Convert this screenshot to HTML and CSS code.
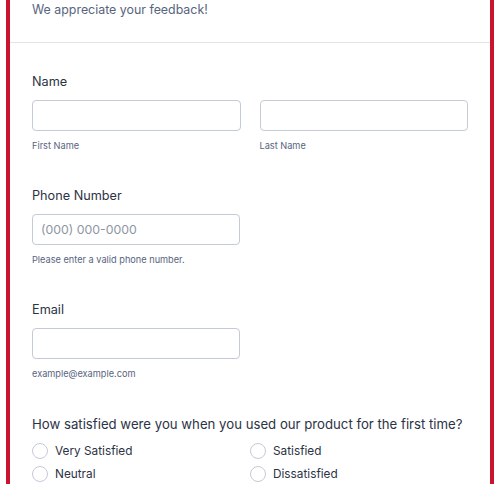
FILE: index.html
```html
<!DOCTYPE html>
<html lang="en">
<head>
  <meta charset="UTF-8">
  <title>Feedback Form</title>
  <link rel="stylesheet" href="styles.css">
</head>
<body>
  <div class="form-card">
    <div class="form-header">
      <p>We appreciate your feedback!</p>
    </div>

    <form class="form-body">
      <div class="field">
        <label class="field-label">Name</label>
        <div class="name-row">
          <div class="name-part">
            <input type="text" class="text-input">
            <span class="sub-label">First Name</span>
          </div>
          <div class="name-part">
            <input type="text" class="text-input">
            <span class="sub-label">Last Name</span>
          </div>
        </div>
      </div>

      <div class="field">
        <label class="field-label">Phone Number</label>
        <input type="tel" class="text-input half" placeholder="(000) 000-0000">
        <span class="sub-label">Please enter a valid phone number.</span>
      </div>

      <div class="field">
        <label class="field-label">Email</label>
        <input type="email" class="text-input half">
        <span class="sub-label">example@example.com</span>
      </div>

      <div class="field">
        <label class="field-label question">How satisfied were you when you used our product for the first time?</label>
        <div class="radio-grid">
          <label class="radio-option"><span class="radio-circle"></span>Very Satisfied</label>
          <label class="radio-option"><span class="radio-circle"></span>Satisfied</label>
          <label class="radio-option"><span class="radio-circle"></span>Neutral</label>
          <label class="radio-option"><span class="radio-circle"></span>Dissatisfied</label>
        </div>
      </div>
    </form>
  </div>
</body>
</html>
```

FILE: styles.css
```css
body {
  margin: 0;
  font-family: 'Inter', 'Noto Sans', sans-serif;
  background: white;
  overflow: hidden;
}
.form-card {
  margin: 0 6px;
  border-left: 4px solid #c8142c;
  border-right: 4px solid #c8142c;
  background: white;
  height: 484px;
}
.form-header {
  padding: 0 22px 22px;
  border-bottom: 1px solid #e3e5ea;
}
.form-header p {
  margin: 0;
  font-size: 12.4px;
  line-height: 20px;
  color: #57647e;
}
.form-body {
  padding: 29px 22px 0;
}
.field {
  display: flex;
  flex-direction: column;
  margin-bottom: 33px;
}
.field-label {
  font-size: 12.7px;
  line-height: 20px;
  color: #2c3345;
  margin-bottom: 8px;
}
.field-label.question {
  font-size: 13.2px;
}
.name-row {
  display: flex;
  gap: 19px;
}
.name-part {
  flex: 1;
  min-width: 0;
  display: flex;
  flex-direction: column;
}
.text-input {
  box-sizing: border-box;
  width: 100%;
  height: 31px;
  border: 1px solid #c3cad8;
  border-radius: 4px;
  padding: 0 8px;
  font-family: inherit;
  font-size: 12.3px;
  color: #2c3345;
  margin: 0;
}
.text-input::placeholder {
  color: #8f96a3;
}
.text-input.half {
  width: 208px;
}
.sub-label {
  margin-top: 8px;
  font-size: 9.2px;
  line-height: 14px;
  color: #57647e;
}
.radio-grid {
  display: grid;
  grid-template-columns: 218px 1fr;
  row-gap: 5px;
}
.radio-option {
  display: flex;
  align-items: center;
  gap: 7px;
  font-size: 11.8px;
  line-height: 18px;
  color: #2c3345;
}
.radio-circle {
  box-sizing: border-box;
  width: 16px;
  height: 16px;
  border: 1px solid #c3cad8;
  border-radius: 50%;
}
```
